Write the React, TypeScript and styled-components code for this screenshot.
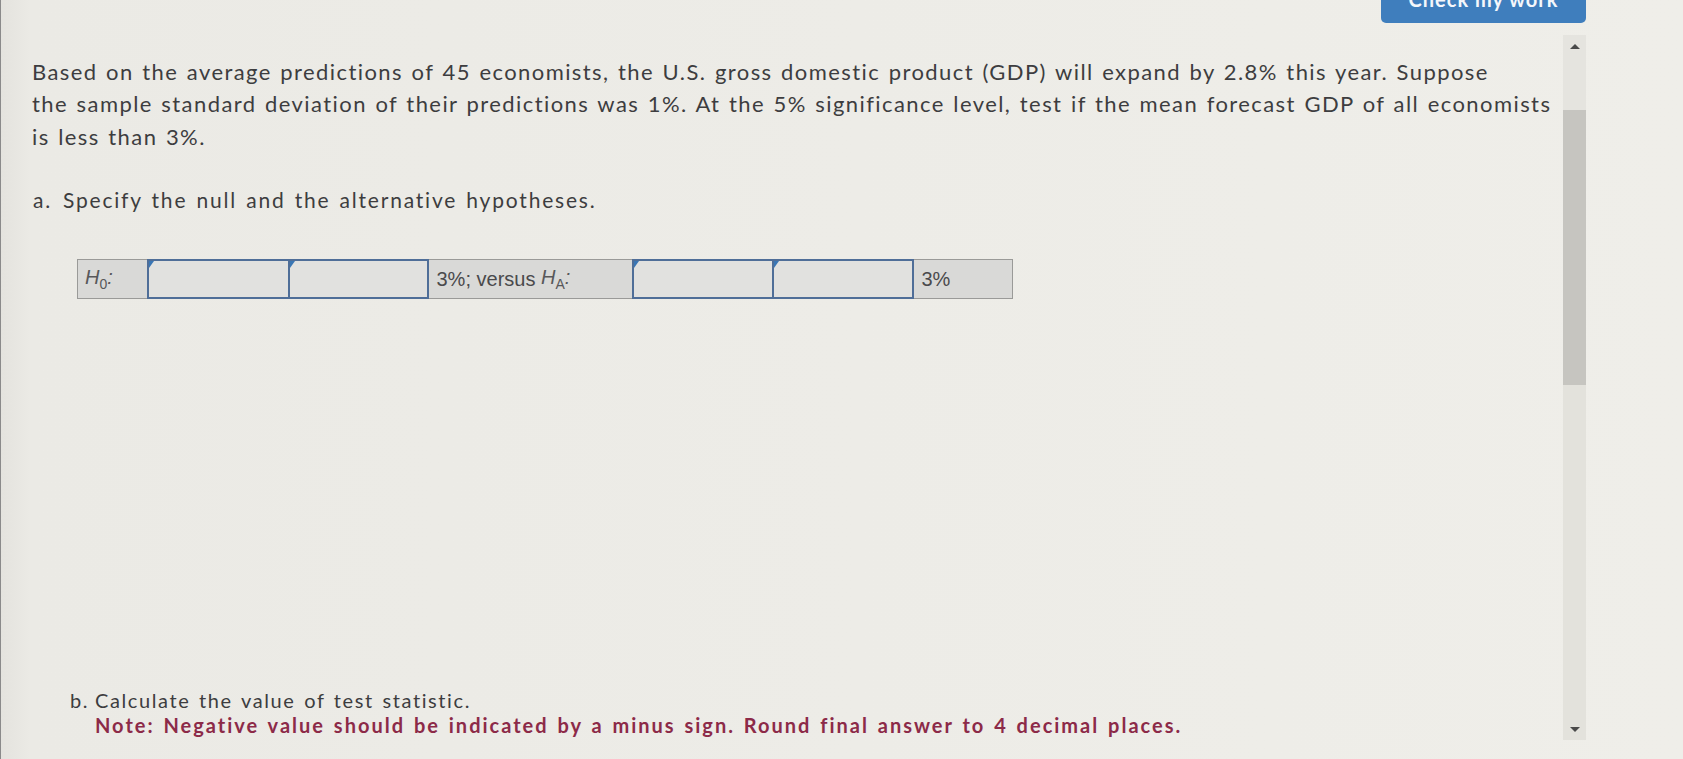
import React from "react";
import styled, { createGlobalStyle } from "styled-components";

const Global = createGlobalStyle`
  html, body { margin: 0; padding: 0; background: #eceae5; }
  body { font-family: Lato, "Open Sans", "Liberation Sans", sans-serif; color: #3d3d3f; overflow: hidden; }
`;

const Page = styled.div`
  width: 1683px;
  height: 759px;
  display: grid;
  grid-template-columns: minmax(0, 1fr) 23px 97px;
  grid-template-rows: 23px minmax(0, 1fr);
  overflow: hidden;
  background: linear-gradient(90deg, #8a8a8a 0, #8a8a8a 1px, #e4e3de 1px, #ebeae5 30px, #efeee9 100%);
`;

const TopBar = styled.div`
  grid-column: 1 / 4;
  display: flex;
  justify-content: flex-end;
  padding-right: 97px;
  overflow: hidden;
`;

const CheckButton = styled.button`
  width: 205px;
  height: 43px;
  margin-top: -20px;
  border: none;
  border-radius: 5px;
  background: #3f7ebd;
  color: #f4f7fb;
  font: 700 20px Lato, "Liberation Sans", sans-serif;
  letter-spacing: 1px;
  padding: 7px 0 0;
  display: flex;
  justify-content: center;
  align-items: flex-start;
  line-height: 24px;
`;

const Content = styled.div`
  padding: 32.5px 0 21px 32px;
  display: flex;
  flex-direction: column;
  min-width: 0;
`;

const Question = styled.p`
  margin: 0;
  font-size: 22px;
  line-height: 32.5px;
  letter-spacing: 1.42px;
  word-spacing: 1.5px;
  white-space: nowrap;
`;

const PartA = styled.div`
  margin-top: 32px;
  display: flex;
  font-size: 21px;
  line-height: 30px;
  letter-spacing: 1.8px;
  word-spacing: 2px;
`;

const Marker = styled.span<{ $w: number }>`
  width: ${(p) => p.$w}px;
  flex: none;
  padding-left: 1px;
`;

const PartB = styled.div`
  display: flex;
  padding-left: 38px;
`;

const PartBText = styled.div`
  display: flex;
  flex-direction: column;
`;

const BLine = styled.p`
  margin: 0;
  font-size: 20px;
  line-height: 25px;
  letter-spacing: 1.6px;
  word-spacing: 2px;
`;

const BMarker = styled.span`
  width: 25px;
  font-size: 20px;
  line-height: 25px;
  letter-spacing: 1.6px;
`;

const Note = styled.p`
  margin: 0;
  font-size: 20px;
  line-height: 25px;
  font-weight: 700;
  letter-spacing: 2px;
  word-spacing: 2px;
  color: #8c2a48;
  white-space: nowrap;
`;

const Table = styled.div`
  margin: 44px 0 0 45px;
  display: flex;
  height: 40px;
  width: 936px;
  border: 1px solid #9a9a98;
  background: #d9d9d7;
  box-sizing: border-box;
`;

const LabelCell = styled.div<{ $w: number }>`
  width: ${(p) => p.$w}px;
  box-sizing: border-box;
  padding: 0 7px;
  display: flex;
  align-items: center;
  font-family: "Liberation Sans", Arial, sans-serif;
  font-size: 20px;
  letter-spacing: 0;
  color: #4a4a4c;
  background: #d9d9d7;
`;

const Math = styled.span`
  font-style: italic;
  color: #58585a;
  sub { font-size: 14px; font-style: normal; vertical-align: -5px; }
`;

const InputCell = styled.div<{ $w: number }>`
  position: relative;
  width: ${(p) => p.$w}px;
  box-sizing: border-box;
  background: #e1e1df;
  border: 2px solid #4f6e98;
  margin: -1px 0;
  & + & { margin-left: -2px; }
`;

const Flag = styled.span`
  position: absolute;
  left: 0;
  top: 0;
  width: 0;
  height: 0;
  border-top: 7px solid #3a76b4;
  border-right: 5px solid transparent;
`;

const Spacer = styled.div`
  flex: 1;
`;

const ScrollCol = styled.div`
  padding: 12px 0 19px;
  display: flex;
  flex-direction: column;
`;

const ArrowBtn = styled.div`
  height: 75px;
  display: flex;
  justify-content: center;
  align-items: flex-start;
  padding-top: 9px;
  box-sizing: border-box;
  background: #e5e4df;
`;

const Thumb = styled.div`
  height: 275px;
  background: #c6c5c0;
`;

const Track = styled.div`
  flex: 1;
  background: #e3e2dc;
  display: flex;
  justify-content: center;
  align-items: flex-end;
  padding-bottom: 8px;
`;

const Tri = styled.span<{ $down?: boolean }>`
  width: 0;
  height: 0;
  border-left: 5px solid transparent;
  border-right: 5px solid transparent;
  ${(p) => (p.$down ? "border-top: 5px solid #4a4a4a;" : "border-bottom: 5px solid #4a4a4a;")}
`;

export default function App() {
  return (
    <>
      <Global />
      <Page>
        <TopBar>
          <CheckButton>Check my work</CheckButton>
        </TopBar>
        <Content>
          <Question>
            Based on the average predictions of 45 economists, the U.S. gross domestic product (GDP) will expand by 2.8% this year. Suppose
            <br />
            the sample standard deviation of their predictions was 1%. At the 5% significance level, test if the mean forecast GDP of all economists
            <br />
            is less than 3%.
          </Question>
          <PartA>
            <Marker $w={30}>a.</Marker>
            <span>Specify the null and the alternative hypotheses.</span>
          </PartA>
          <Table>
            <LabelCell $w={69}>
              <Math>
                H<sub>0</sub>:
              </Math>
            </LabelCell>
            <InputCell $w={144}>
              <Flag />
            </InputCell>
            <InputCell $w={142}>
              <Flag />
            </InputCell>
            <LabelCell $w={203}>
              3%; versus&nbsp;
              <Math>
                H<sub>A</sub>:
              </Math>
            </LabelCell>
            <InputCell $w={143}>
              <Flag />
            </InputCell>
            <InputCell $w={143}>
              <Flag />
            </InputCell>
            <LabelCell $w={98}>3%</LabelCell>
          </Table>
          <Spacer />
          <PartB>
            <BMarker>b.</BMarker>
            <PartBText>
              <BLine>Calculate the value of test statistic.</BLine>
              <Note>Note: Negative value should be indicated by a minus sign. Round final answer to 4 decimal places.</Note>
            </PartBText>
          </PartB>
        </Content>
        <ScrollCol>
          <ArrowBtn>
            <Tri />
          </ArrowBtn>
          <Thumb />
          <Track>
            <Tri $down />
          </Track>
        </ScrollCol>
        <div />
      </Page>
    </>
  );
}
